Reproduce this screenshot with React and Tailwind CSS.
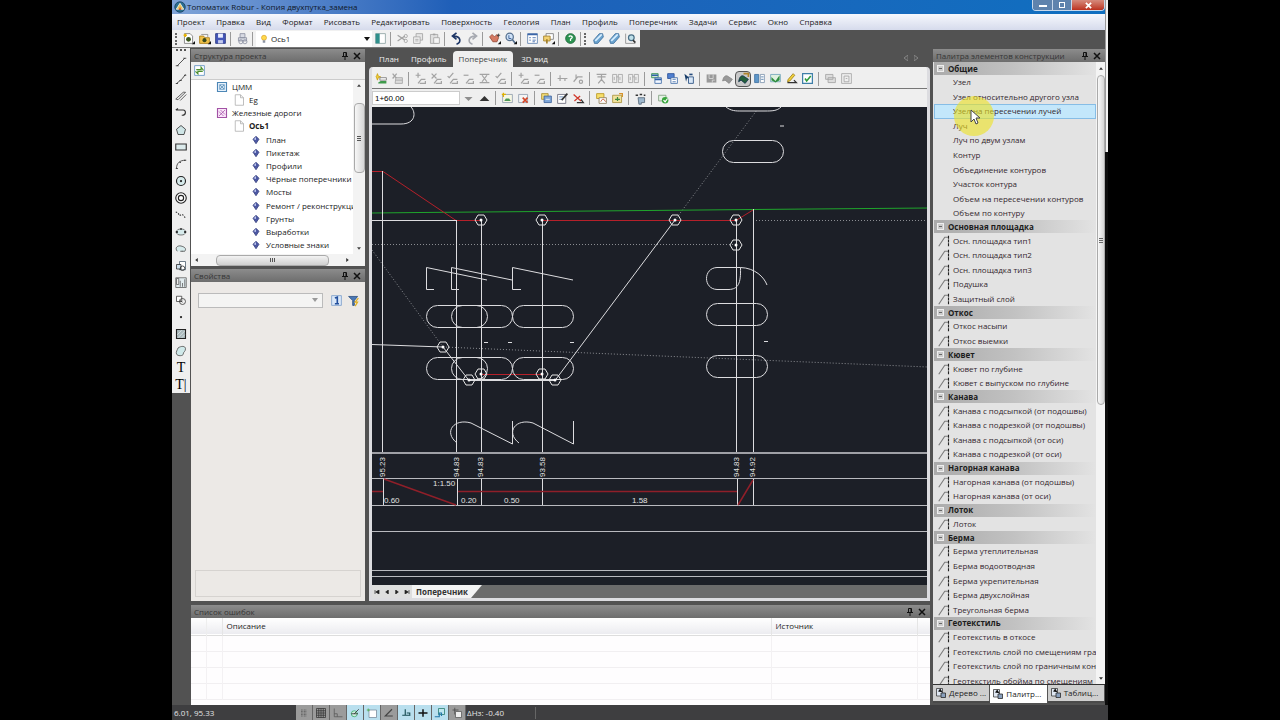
import { Fragment } from "react";
import clsx from "clsx";

const menuItems = [
  "Проект", "Правка", "Вид", "Формат", "Рисовать", "Редактировать", "Поверхность", "Геология",
  "План", "Профиль", "Поперечник", "Задачи", "Сервис", "Окно", "Справка",
];

const treeRows = [
  { label: "ЦММ", level: 0, icon: "dtm" },
  { label: "Eg", level: 1, icon: "sheet" },
  { label: "Железные дороги", level: 0, icon: "rail" },
  { label: "Ось1", level: 1, icon: "sheet", bold: true },
  { label: "План", level: 2, icon: "gem" },
  { label: "Пикетаж", level: 2, icon: "gem" },
  { label: "Профили", level: 2, icon: "gem" },
  { label: "Чёрные поперечники", level: 2, icon: "gem" },
  { label: "Мосты", level: 2, icon: "gem" },
  { label: "Ремонт / реконструкция", level: 2, icon: "gem" },
  { label: "Грунты", level: 2, icon: "gem" },
  { label: "Выработки", level: 2, icon: "gem" },
  { label: "Условные знаки", level: 2, icon: "gem" },
];

const paletteGroups = [
  {
    title: "Общие",
    plain: true,
    items: [
      "Узел", "Узел относительно другого узла", "Узел на пересечении лучей", "Луч", "Луч по двум узлам",
      "Контур", "Объединение контуров", "Участок контура", "Объем на пересечении контуров", "Объем по контуру",
    ],
  },
  { title: "Основная площадка", items: ["Осн. площадка тип1", "Осн. площадка тип2", "Осн. площадка тип3", "Подушка", "Защитный слой"] },
  { title: "Откос", items: ["Откос насыпи", "Откос выемки"] },
  { title: "Кювет", items: ["Кювет по глубине", "Кювет с выпуском по глубине"] },
  {
    title: "Канава",
    items: [
      "Канава с подсыпкой (от подошвы)", "Канава с подрезкой (от подошвы)",
      "Канава с подсыпкой (от оси)", "Канава с подрезкой (от оси)",
    ],
  },
  { title: "Нагорная канава", items: ["Нагорная канава (от подошвы)", "Нагорная канава (от оси)"] },
  { title: "Лоток", items: ["Лоток"] },
  { title: "Берма", items: ["Берма утеплительная", "Берма водоотводная", "Берма укрепительная", "Берма двухслойная", "Треугольная берма"] },
  {
    title: "Геотекстиль",
    items: [
      "Геотекстиль в откосе", "Геотекстиль слой по смещениям границ",
      "Геотекстиль слой по граничным контурам", "Геотекстиль обойма по смещениям",
    ],
  },
];

const selectedItem = "Узел на пересечении лучей";

// 16x16 drawings shared by all the toolbars
const G = "#a3a3a3";
const slope = <path d="M5 14l4-5h5M7 14h7v-3" stroke={G} strokeWidth="1.5" />;
const icons = {
  app: <><circle cx="8" cy="8" r="7" fill="#2b6f8f" stroke="#123a5c" /><path d="M3 11l5-8 5 8z" fill="#e9c15b" stroke="#fff" /><path d="M6 12l2-4 2 4z" fill="#c4552b" /></>,
  new: <><path d="M3 2h7l3 3v9H3z" fill="#fff" stroke="#777" /><circle cx="8" cy="9" r="3" fill="#39551d" /><path d="M2 4h4M4 2v4" stroke="#e8b400" strokeWidth="2" /><path d="M12 15h4v-4z" fill="#111" /></>,
  open: <><path d="M2 5h5l1 2h6v7H2z" fill="#f0c24b" stroke="#a97a13" /><circle cx="8" cy="10" r="2.5" fill="#3b4a1b" /><path d="M4 3h8v3" stroke="#888" /><path d="M12 15h4v-4z" fill="#111" /></>,
  save: <><path d="M2 2h12v12H2z" fill="#4557b8" stroke="#27357f" /><path d="M5 2h6v5H5z" fill="#e9edff" /><path d="M5 10h6v4H5z" fill="#c4cbee" /></>,
  print: <><path d="M5 2h6v5H5zM3 7h10v4H3z" fill="#d8dbe4" stroke="#8a8fa0" /><circle cx="6" cy="12" r="2.5" stroke="#8a8fa0" /><circle cx="11" cy="12" r="2.5" stroke="#8a8fa0" /></>,
  bulb: <><circle cx="8" cy="6" r="4" fill="#ffd94d" stroke="#d79b1b" /><path d="M6 10h4v4H6z" fill="#8d95a5" /></>,
  panel: <><path d="M2 2h12v12H2z" fill="#fff" stroke="#8aa0a0" /><path d="M2 2h5v12H2z" fill="#2f8f8b" /></>,
  cut: <><path d="M2 4l9 6M2 11l9-6" stroke={G} strokeWidth="1.5" /><circle cx="12" cy="5" r="2" stroke={G} /><circle cx="12" cy="11" r="2" stroke={G} /></>,
  copy: <><path d="M5 2h8v8H5z" fill="#e6e6e6" stroke={G} /><path d="M2 6h8v8H2z" fill="#f1f1f1" stroke={G} /><path d="M4 9h4M4 11h4" stroke={G} /></>,
  paste: <><path d="M3 3h9v11H3z" fill="#e0e0e0" stroke={G} /><path d="M6 2h3v2H6z" fill={G} /><path d="M7 7h7v7H7z" fill="#f5f5f5" stroke={G} /></>,
  undo: <path d="M8 15C14 13 14 5 4 5M8 1L3 5l5 4" stroke="#1c3566" strokeWidth="2" />,
  redo: <path d="M8 15C2 13 2 5 12 5M8 1l5 4-5 4" stroke="#a6a9b0" strokeWidth="2" />,
  hand: <><path d="M2 6l3-3 3 3 3-3 2 4-2 5H6z" fill="#d57a63" stroke="#954531" /><path d="M11 4h4M13 2v4" stroke="#333" /><path d="M12 15h4v-4z" fill="#111" /></>,
  zoom: <><circle cx="7" cy="6" r="4.5" fill="#cfe2f7" stroke="#56708f" strokeWidth="1.5" /><path d="M6 4v4h3" stroke="#27508c" /><path d="M10 9l4 5" stroke="#56708f" strokeWidth="2" /><path d="M12 15h4v-4z" fill="#111" /></>,
  list: <><path d="M2 2h12v12H2z" fill="#fff" stroke="#5d7fae" /><path d="M2 3h12" stroke="#3a65a8" strokeWidth="2" /><path d="M4 7h2M4 10h2M8 7h4M8 10h4M8 12h3" stroke="#3a65a8" /></>,
  props: <><path d="M5 2h9v7H5z" fill="#fff" stroke="#777" /><path d="M2 5h8v6H2z" fill="#f3d271" stroke="#9f7b24" /><path d="M6 9v5" stroke="#9f7b24" strokeWidth="2" /><path d="M12 15h4v-4z" fill="#111" /></>,
  help: <><circle cx="8" cy="8" r="6" fill="#2c9451" stroke="#1b6337" /><path d="M6 6c1-2 5-1 4 1L8 9v2" stroke="#fff" strokeWidth="1.5" /></>,
  tube: <><path d="M2 10l7-8h4l1 4-7 8H3z" fill="#6ba3cf" stroke="#3f6f9c" /><path d="M4 11l8-8" stroke="#d9efff" strokeWidth="2" /></>,
  find: <><path d="M2 2v12h12" stroke="#8a8a8a" /><circle cx="9" cy="7" r="3.5" fill="#bfe0ea" stroke="#4a6f86" strokeWidth="1.5" /><path d="M11 10l3 3" stroke="#333" strokeWidth="2" /></>,
  refresh: <><path d="M2 2h12v12H2z" fill="#fff" stroke="#5d8fc0" /><path d="M4 7h6V4l3 4M12 9H6v3L3 9" stroke="#4d8f2f" strokeWidth="1.5" /></>,
  layer: <><path d="M3 2l1 3 3 1-3 1-1 3-1-3-1-1 1-1z" fill="#f2cf3a" stroke="#c79f10" /><path d="M6 7h8v3H6z" fill="#fff" stroke="#777" /><path d="M4 13l3-2h7v3H4z" fill="#3f9a4b" /></>,
  layerOff: <><path d="M2 2l5 6M7 2L2 8" stroke={G} strokeWidth="1.5" /><path d="M6 7h8v7H5z" fill="#ddd" stroke={G} /><path d="M6 10h8" stroke={G} /></>,
  slopeAdd: <>{slope}<path d="M2 4h6M5 1v6" stroke={G} strokeWidth="1.5" /></>,
  slopeDel: <>{slope}<path d="M2 4h6" stroke={G} strokeWidth="1.5" /></>,
  slopeCut: <>{slope}<path d="M2 2l6 6M8 2L2 8" stroke={G} strokeWidth="1.5" /></>,
  slopeCheck: <>{slope}<path d="M2 5l2 2 5-6" stroke={G} strokeWidth="1.5" /></>,
  hourglass: <path d="M2 3h12M2 13h12M5 4l6 8M11 4l-6 8" stroke={G} strokeWidth="1.5" />,
  line: <path d="M2 8h12M5 4v7M11 8v3" stroke={G} strokeWidth="1.5" />,
  node: <path d="M2 12l5-6h6M9 12a2 2 0 104 0 2 2 0 10-4 0M5 3v5" stroke={G} strokeWidth="1.5" />,
  person: <path d="M2 3h12M8 3v6M3 6h10M8 9l-4 5M8 9l4 5" stroke={G} strokeWidth="1.5" />,
  book: <path d="M2 3h5v10H2zM9 3h5v10H9zM7 6h2M4 6v4M11 6v4" stroke={G} />,
  tblDb: <><path d="M2 2h8v5H2z" fill="#cde8cf" stroke="#2c8a4c" /><path d="M6 7h8v7H6z" fill="#f3f8ff" stroke="#3e6aa6" /><path d="M6 9h8M2 4h8" stroke="#2d61a8" strokeWidth="2" /></>,
  tblBlue: <><path d="M2 2h8v6H2z" fill="#4f7fd0" stroke="#2b4f96" /><path d="M6 7h8v7H6z" fill="#fff" stroke="#3e6aa6" /><path d="M8 9h4M8 12h4" stroke="#3e6aa6" /></>,
  pick: <><path d="M3 2l6 5-3 1-1 4z" fill="#173c68" /><path d="M8 6h6v8H8z" fill="#d9e7f7" stroke="#234a7c" /><path d="M9 3h4" stroke="#234a7c" strokeWidth="2" /></>,
  blockGray: <><path d="M2 3h12v10H2z" fill="#999" /><path d="M5 3v5h5V3M9 13v-3h3" stroke="#ddd" /></>,
  fillGray: <path d="M2 11C3 5 6 4 8 5l6 4-4 5-5-4z" fill="#999" stroke="#888" />,
  fillGreen: <><path d="M2 12C3 5 6 4 8 5l6 4-4 5-5-4z" fill="#24603a" stroke="#17334f" /><path d="M8 2h6v4" stroke="#b1852c" strokeWidth="2" /></>,
  split: <><path d="M2 3h5v10H2z" fill="#5e97c9" stroke="#3e6fa0" /><path d="M9 3h5v10H9z" fill="#fff" stroke="#7b93ad" /><path d="M10 6h3M10 9h3" stroke="#3e6fa0" /></>,
  flagGreen: <><path d="M2 3h12v9H2z" fill="#dff0df" stroke="#6fa3b9" /><path d="M3 6l5 5 5-7v6l-5 3-5-3z" fill="#2f8e40" /></>,
  pencil: <><path d="M4 9l6-7 2 2-6 7-3 1z" fill="#f3d33e" stroke="#9b7c11" /><path d="M3 13h11l-3-3" stroke="#333" strokeWidth="1.5" /></>,
  check: <><path d="M2 2h12v12H2z" fill="#fff" stroke="#3f7fa8" strokeWidth="1.5" /><path d="M5 8l2 3 5-6" stroke="#2f9b3a" strokeWidth="2" /></>,
  stack: <path d="M2 3h9v6H2zM5 7h9v6H5z" fill="#ddd" stroke={G} />,
  frame: <path d="M2 2h12v12H2zM5 5h6v7H5zM7 8h2" stroke={G} />,
  down: <path d="M3 6h10l-5 5z" fill="#8e8e8e" />,
  up: <path d="M2 11h12L8 5z" fill="#333" />,
  secAdd: <><path d="M2 3h12v10H2z" fill="#f7f7e4" stroke="#8f9cae" /><path d="M4 11l2-3h4l2 3z" fill="#4f9a57" /><path d="M1 3h5M3 1v5" stroke="#e0b100" strokeWidth="1.5" /></>,
  secDel: <><path d="M2 3h11v10H2z" fill="#f4f4f4" stroke="#8f9cae" /><path d="M7 7l6 6M13 7l-6 6" stroke="#d3472a" strokeWidth="2" /></>,
  secBlue: <><path d="M2 2h8v7H2z" fill="#f3dd77" stroke="#a98b2b" /><path d="M5 5h9v8H5z" fill="#7ea6d8" stroke="#3c619b" /><path d="M7 9h5" stroke="#fff" /></>,
  edit: <><path d="M2 3h10v11H2z" fill="#fff" stroke="#667" /><path d="M4 6h5M4 9h4" stroke="#4a76ad" /><path d="M7 10l7-8" stroke="#333" strokeWidth="2" /></>,
  cross: <><path d="M2 3l9 8M3 11l7-6" stroke="#d0392b" strokeWidth="1.5" /><path d="M6 13h8l-3-4" stroke="#333" strokeWidth="1.5" /></>,
  copySec: <><path d="M2 2h9v6H2z" fill="#f7df6a" stroke="#b7921b" /><path d="M5 7h9v7H5z" fill="#fff" stroke="#8a7a56" /><path d="M7 12l2-3h2l2 3" stroke="#c2512d" /></>,
  pasteSec: <><path d="M2 4h11v9H2z" fill="#f1e29b" stroke="#a9913d" /><path d="M5 9h6M8 6v5" stroke="#3d8a3f" strokeWidth="1.5" /><path d="M10 2h4v4" stroke="#d6932b" strokeWidth="1.5" /></>,
  chess: <><path d="M2 3h3v2H2zM7 2h3v2H7zM12 3h2v2h-2z" fill="#333" /><path d="M5 7h8v6H9v2H6z" fill="#9db7cd" stroke="#567" /></>,
  ok: <><path d="M2 4h9v7H2z" fill="#e5f2e5" stroke="#7c9d7c" /><circle cx="10" cy="10" r="4" fill="#37a53c" /><path d="M8 10l2 2 3-4" stroke="#fff" strokeWidth="1.5" /></>,
  one: <><path d="M2 2h12v12H2z" fill="#dbe8f8" stroke="#7b9cc9" /><path d="M6 5l3-1v8M6 12h5" stroke="#234f9c" strokeWidth="2" /></>,
  filter: <><path d="M2 3h11l-4 5v6H7V8z" fill="#4a78b5" stroke="#2b4d80" /><path d="M14 5l-4 5h3l-3 5" stroke="#e0b021" strokeWidth="1.5" /></>,
  dtm: <><path d="M2 2h12v12H2z" fill="#e8f3fc" stroke="#4d87b6" strokeWidth="1.5" /><path d="M5 5h6v6H5zM5 5l6 6M11 5l-6 6" stroke="#4d87b6" /></>,
  rail: <><path d="M2 2h12v12H2z" fill="#fbe6fa" stroke="#a252a5" strokeWidth="1.5" /><path d="M4 12l8-8M4 6l6 6M6 4l6 6" stroke="#a252a5" /></>,
  sheet: <path d="M3 1h7l4 4v10H3zM10 1v4h4" fill="#fff" stroke="#a9a9a9" />,
  gem: <><path d="M8 3l4 4-4 6-4-6z" fill="#4c58a4" stroke="#333c7a" /><path d="M8 4v4L5 7z" fill="#c0c9f0" /></>,
  // drawing tools
  segment: <path d="M3 13L13 3M1 13h4M11 3h4" stroke="#222" />,
  poly: <path d="M2 14l5-4 3-3 4-5M6 10h3M1 14h3M12 3h3" stroke="#222" />,
  multi: <path d="M1 12L11 3h3L4 13zM7 14l8-8" stroke="#333" />,
  arcLine: <path d="M1 4h10c4 0 4 7-1 7M1 4l3-2M9 11h3" stroke="#333" strokeWidth="1.5" />,
  pent: <path d="M8 2l6 5-2 7H4L2 7z" fill="#cfe5e6" stroke="#222" />,
  rect: <path d="M1 4h14v8H1z" fill="#dcebec" stroke="#333" strokeWidth="1.5" />,
  arc: <path d="M2 14C2 7 6 3 14 3M1 14h3M6 6h2M12 3h3" stroke="#222" />,
  circle: <><circle cx="8" cy="8" r="6" fill="#d7ebec" stroke="#222" strokeWidth="1.5" /><circle cx="8" cy="8" r="1.5" fill="#222" /></>,
  ring: <><circle cx="8" cy="8" r="7" fill="#fff" stroke="#222" strokeWidth="1.5" /><circle cx="8" cy="8" r="3.5" stroke="#222" strokeWidth="1.5" /></>,
  spline: <path d="M1 4l3 1 2 4 3-2 3 2 2 4" stroke="#333" strokeDasharray="2 2" strokeWidth="1.5" />,
  ellipse: <><ellipse cx="8" cy="8" rx="6" ry="4" fill="#d7ebec" stroke="#555" /><path d="M1 8h3M12 8h3M8 3v2" stroke="#111" strokeWidth="2" /></>,
  ellArc: <path d="M3 11C-1 6 4 3 8 4s8 3 5 7H9M7 11h3" fill="#d7ebec" stroke="#444" />,
  blockIn: <><path d="M6 2h8v11H6z" fill="#fff" stroke="#456" /><path d="M2 6h6v6H2z" fill="#cfe0ec" stroke="#222" /><circle cx="10" cy="11" r="3" stroke="#222" /></>,
  rulers: <path d="M2 2h3v8H2zM7 5v8M10 8v5M13 3v10M1 14h14V1H1z" fill="#e1ebee" stroke="#555" />,
  block: <><path d="M2 3h7v7H2z" fill="#fff" stroke="#333" /><circle cx="10" cy="10" r="4" stroke="#333" /><path d="M6 8l4 3" stroke="#333" /></>,
  dot: <circle cx="8" cy="8" r="1.5" fill="#222" />,
  hatch: <><path d="M2 2h12v12H2z" fill="#aab9bc" stroke="#222" strokeWidth="1.5" /><path d="M3 9l6-6M4 13l9-9M9 13l4-4" stroke="#dfe8ea" /></>,
  region: <path d="M4 4c4-3 10-3 10 1s-3 4-3 7-8 3-9 0 1-5 2-8z" fill="#cfe9ea" stroke="#444" />,
  // status bar toggles
  snap: <path d="M4 4h8M4 6h8M4 8h8M4 10h8M4 12h8" stroke="#444" strokeDasharray="1 1" />,
  grid: <path d="M2 2h12v12H2zM2 5h12M2 8h12M2 11h12M5 2v12M8 2v12M11 2v12" stroke="#333" />,
  ortho: <path d="M3 2v11h11M3 9h4v4" stroke="#555" />,
  polar: <><circle cx="7" cy="9" r="4" fill="#cfeee0" stroke="#3a6" /><path d="M3 9h9M7 9l6-6" stroke="#222" /></>,
  osnap: <><path d="M4 4h10v10H4z" fill="#fff" stroke="#789" /><path d="M1 4h4M3 2v4" stroke="#4a4" /></>,
  angle: <path d="M12 3L3 12h10" stroke="#444" strokeWidth="1.5" />,
  perp: <path d="M7 3v8M3 11h9M9 8h4v4" stroke="#154a50" strokeWidth="1.5" />,
  plus: <path d="M8 3v10M2 8h12" stroke="#111" strokeWidth="2" />,
  objs: <><path d="M6 2h8v8H6z" fill="#bfe6ef" stroke="#276" /><path d="M1 13h6V8h3v4" stroke="#27a" strokeWidth="1.5" /></>,
  copies: <><path d="M2 4h8M5 1v9" stroke="#444" /><path d="M6 6h8v8H6z" fill="#eee" stroke="#555" /></>,
  tabDoc: <><path d="M2 2h8v10H2z" fill="#dfe7f2" stroke="#333" /><path d="M4 6l3-4 3 5z" fill="#111" /><path d="M8 8h6v6H8z" fill="#8aa0bd" stroke="#222" /></>,
  elem: <><path d="M1 15L9 3h5" stroke="#7d7d7d" strokeWidth="1.5" /><path d="M14 1v15" stroke="#222" strokeWidth="1.5" strokeDasharray="4 1" /></>,
};

const mainTools = [
  ["new", "open", "save"], ["print"], "combo", ["panel"], ["cut", "copy", "paste"], ["undo", "redo"],
  ["hand", "zoom"], ["list", "props"], ["help"], ["tube", "tube", "find"],
];

const sectionTools = [
  ["layer", "layerOff"],
  ["slopeAdd", "slopeCut", "slopeCheck", "slopeDel", "hourglass", "slopeCheck"],
  ["slopeAdd", "slopeDel"], ["line", "node"], ["person", "book", "book"], ["tblDb", "tblBlue", "pick"],
  ["blockGray", "fillGray", "fillGreen", "split", "flagGreen", "pencil", "check"], ["stack", "frame"],
];

const stationTools = [["down", "up"], ["secAdd", "secDel"], ["secBlue", "edit", "cross"], ["copySec", "pasteSec"], ["chess"], ["ok"]];

const drawTools = [
  "segment", "poly", "multi", "arcLine", "pent", "rect", "arc", "circle", "ring", "spline",
  "ellipse", "ellArc", "blockIn", "rulers", "block", "dot", "hatch", "region",
];

const statusTools = [
  ["snap"], ["grid"], ["ortho"], ["polar", true], ["osnap", true], ["angle"], ["perp", true], ["plus", true], ["objs", true], ["copies"],
];

function Icon({ name, className = "size-[13px]" }) {
  return (
    <svg viewBox="0 0 16 16" fill="none" aria-hidden="true" className={clsx("shrink-0", className)}>
      {icons[name]}
    </svg>
  );
}

function ToolButton({ name, active }) {
  return (
    <button
      type="button"
      aria-label={name}
      className={clsx(
        "flex h-4 w-[16px] shrink-0 items-center justify-center",
        active && "rounded-sm border border-[#555] bg-[#c9c9c9]"
      )}
    >
      <Icon name={name} />
    </button>
  );
}

function Divider({ className = "mr-[3px] ml-0.5" }) {
  return <span className={clsx("h-3.5 w-px shrink-0 bg-[#9a9a9a]", className)} />;
}

function ToolGroups({ groups, active }) {
  return groups.map((group, i) => (
    <Fragment key={i}>
      {i > 0 && <Divider className="mx-[3px]" />}
      {group.map((name, j) => (
        <ToolButton key={j} name={name} active={name === active} />
      ))}
    </Fragment>
  ));
}

function PanelHeader({ title }) {
  return (
    <div className="flex h-[13px] shrink-0 items-center bg-linear-to-b from-[#8c8c8c] to-[#6d6d6d] pr-1 pl-[3px]">
      <h2 className="flex-1 truncate text-[#363636]">{title}</h2>
      <button type="button" aria-label="Закрепить" className="mr-1">
        <svg viewBox="0 0 8 8" className="size-2" fill="none" stroke="#111">
          <path d="M2.500 0.500h3v4h-3zM1 4.500h6M4 4.500V8M5 1v3" />
        </svg>
      </button>
      <button type="button" aria-label="Закрыть">
        <svg viewBox="0 0 8 8" className="size-2" stroke="#111" strokeWidth="1.500">
          <path d="M1 1l6 6M7 1L1 7" />
        </svg>
      </button>
    </div>
  );
}

function TitleBar() {
  return (
    <header className="flex h-3.5 shrink-0 bg-linear-to-r from-[#7fa3d8] via-[#1f5fb8] via-30% to-[#0f6fc0]">
      <Icon name="app" className="mt-px ml-0.5 size-3" />
      <h1 className="flex-1 pl-px leading-[14px] text-[#101828]">Топоматик Robur - Копия двухпутка_замена</h1>
      <div className="flex h-[11px] overflow-hidden rounded-b-sm border border-t-0 border-[#c8d8ea]">
        <button type="button" aria-label="Свернуть" className="flex w-[19px] items-end justify-center bg-[#5f83ad] pb-[3px]">
          <span className="h-0.5 w-2 bg-white" />
        </button>
        <button type="button" aria-label="Развернуть" className="flex w-5 items-center justify-center border-x border-[#c8d8ea] bg-[#5f83ad]">
          <span className="size-1.5 border border-white" />
        </button>
        <button type="button" aria-label="Закрыть окно" className="flex w-8 items-center justify-center bg-linear-to-b from-[#d58a7c] to-[#bb2f1d]">
          <svg viewBox="0 0 8 8" className="size-[7px]" stroke="#fff" strokeWidth="2">
            <path d="M1 1l6 6M7 1L1 7" />
          </svg>
        </button>
      </div>
    </header>
  );
}

function MainToolbar() {
  return (
    <div className="flex h-[18px] shrink-0 bg-[#525252]">
      <div className="flex items-center border-b border-[#777] bg-[#f1f1f1] pr-0.5 pl-[3px]">
        <span className="mr-[3px] h-3 border-l-2 border-dotted border-[#666]" />
        {mainTools.map((group, i) => (
          <Fragment key={i}>
            {i > 0 && i !== 3 && <Divider />}
            {i === 9 && <span className="mr-1 h-3 border-l-2 border-dotted border-[#666]" />}
            {group === "combo" ? (
              <label className="flex h-4 w-[116px] items-center bg-white pl-[3px]">
                <Icon name="bulb" className="size-2.5" />
                <select aria-label="Ось" className="flex-1 appearance-none bg-white pl-0.5 text-[#222]">
                  <option>Ось1</option>
                </select>
                <svg viewBox="0 0 6 4" className="mr-0.5 h-1 w-1.5" fill="#111"><path d="M0 0h6L3 4z" /></svg>
              </label>
            ) : (
              group.map((name, j) => <ToolButton key={j} name={name} />)
            )}
          </Fragment>
        ))}
      </div>
    </div>
  );
}

function DrawBar() {
  return (
    <div className="flex w-[18px] shrink-0 flex-col items-center self-start bg-[#efefef] pt-px">
      <span className="mb-0.5 w-2.5 border-t-2 border-dotted border-[#555]" />
      {drawTools.map((name) => (
        <button key={name} type="button" aria-label={name} className="flex h-[17px] w-full items-center justify-center">
          <Icon name={name} className="size-3" />
        </button>
      ))}
      <button type="button" className="h-[17px] w-full font-[Liberation_Serif,serif] text-[14px] leading-[17px] text-black">T</button>
      <button type="button" className="h-[17px] w-full font-[Liberation_Serif,serif] text-[14px] leading-[17px] text-black">T|</button>
    </div>
  );
}

function ProjectPanel() {
  return (
    <section className="flex h-[217px] shrink-0 flex-col bg-[#eee]">
      <PanelHeader title="Структура проекта" />
      <div className="flex h-[17px] shrink-0 items-center">
        <ToolButton name="refresh" />
      </div>
      <div className="flex min-h-0 flex-1 border-t border-[#ccc] bg-white">
        <ul className="flex min-w-0 flex-1 flex-col overflow-hidden pb-0.5 text-[#1b1b1b]">
          {treeRows.map((row) => (
            <li
              key={row.label}
              className={clsx(
                "flex min-h-0 flex-1 items-center gap-1 whitespace-nowrap",
                row.level === 0 && "pl-[25px]",
                row.level === 1 && "pl-[42px]",
                row.level === 2 && "pl-[59px]",
                row.bold && "font-bold"
              )}
            >
              <Icon name={row.icon} className="size-3" />
              {row.label}
            </li>
          ))}
        </ul>
        <div className="flex w-3 shrink-0 flex-col items-center justify-between bg-[#f3f3f3] py-1">
          <svg viewBox="0 0 6 4" className="h-[3px] w-1" fill="#444"><path d="M0 4h6L3 0z" /></svg>
          <span className="mt-4 mb-auto flex h-[70px] w-[11px] flex-col items-center justify-center gap-px rounded-sm border border-[#aaa] bg-linear-to-r from-[#f7f7f7] to-[#d6d6d6]">
            <i className="h-px w-1 bg-[#555]" />
            <i className="h-px w-1 bg-[#555]" />
            <i className="h-px w-1 bg-[#555]" />
          </span>
          <svg viewBox="0 0 6 4" className="h-[3px] w-1" fill="#444"><path d="M0 0h6L3 4z" /></svg>
        </div>
      </div>
      <div className="flex h-3 shrink-0 items-center justify-between bg-[#f3f3f3] pr-4 pl-1">
        <svg viewBox="0 0 4 6" className="h-1 w-[3px]" fill="#333"><path d="M4 0v6L0 3z" /></svg>
        <span className="flex h-[11px] w-[113px] items-center justify-center gap-px rounded-sm border border-[#aaa] bg-linear-to-b from-[#f3f3f3] to-[#cfcfcf]">
          <i className="h-1 w-px bg-[#555]" />
          <i className="h-1 w-px bg-[#555]" />
          <i className="h-1 w-px bg-[#555]" />
        </span>
        <svg viewBox="0 0 4 6" className="h-1 w-[3px]" fill="#333"><path d="M0 0v6l4-3z" /></svg>
      </div>
    </section>
  );
}

function PropertiesPanel() {
  return (
    <section className="flex min-h-0 flex-1 flex-col bg-[#ece9e6]">
      <PanelHeader title="Свойства" />
      <div className="mt-2.5 flex items-center gap-px pr-1 pl-[7px]">
        <div className="mr-1 flex h-[15px] flex-1 items-center border border-[#bbb] bg-[#f4f4f3]">
          <select aria-label="Объект" className="flex-1 appearance-none" />
          <svg viewBox="0 0 6 4" className="mr-1 h-1 w-1.5" fill="#999"><path d="M0 0h6L3 4z" /></svg>
        </div>
        <ToolButton name="one" />
        <ToolButton name="filter" />
      </div>
      <div className="mx-1 mt-auto mb-1 h-[27px] border border-[#d6d3d0]" />
    </section>
  );
}

const capsules = [
  [722, 141, 61], [426, 306, 61], [451, 306, 61], [512, 306, 61], [706, 304, 61],
  [426, 358, 61], [451, 358, 61], [512, 358, 61], [706, 356, 61],
];
const nodes = [
  [481, 220], [542, 220], [675, 220], [736, 220], [736, 245], [443, 347], [469, 380], [481, 374], [542, 374], [555, 380],
];
const marks = [[382, "95.23"], [456, "94.83"], [480, "94.83"], [542, "93.58"], [736, "94.83"], [752, "94.92"]];

function Drawing() {
  return (
    <svg
      viewBox="372 107 555 478"
      preserveAspectRatio="xMinYMin slice"
      fill="none"
      role="img"
      aria-label="Поперечник 1+60.00"
      className="min-h-0 w-full flex-1 bg-[#1c1f27]"
    >
      <g stroke="#8b8d92" strokeDasharray="1 2">
        <path d="M372 244.500H736M753 220.500H928M372 250L443 347M675 220L757 110M443 347L928 367" />
      </g>
      <path d="M372 213L420 212.500L540 211.500L753 209.500L928 208" stroke="#1fa52c" />
      <path d="M372 171.500H383L456 220.500H481M542 220.500H736L753 210M481 374.500H542" stroke="#b5202a" />
      <g stroke="#dcdcdf">
        <path d="M382.500 171V452M456.500 220V452M481.500 220V452M542.500 220V452M736.500 220V452M753.500 209V452" />
        <path d="M372 220.500H456M372 344.500L443 347L469 380.500H555L675 220" />
        <path d="M372 124H401C416 124 416 112 411 107M726 107C731 111 736 111 741 111H765C772 111 777 111 781 107" />
        {capsules.map(([x, y, w], i) => (
          <rect key={i} x={x + 0.5} y={y - 0.5} width={w} height="22" rx="11" />
        ))}
        <path d="M434 289.500H426.500V267.500L487 280M459 289.500H451.500V267.500L512 280M521 289.500H512.500V267.500L573 280" />
        <path d="M740.500 267.500H717C703 268 703 289 717 289.500H729C738 289 741 284 740.500 267.500C755 268 764 277 767 285" />
        <path d="M457 443C443 432 454 418 471 423L512.500 444V421M519 443C505 432 516 418 533 423L573.500 444V421" />
        <path d="M484 342.500H488M508 342.500H512M570 342.500H574M780 126H784M764 341.500H768" />
      </g>
      {nodes.map(([x, y], i) => (
        <g key={i}>
          <path d={`M${x - 6} ${y}l3-5h6l3 5-3 5h-6z`} stroke="#e6e6e6" />
          <circle cx={x} cy={y} r="1.500" fill="#fff" />
        </g>
      ))}
      <path d="M372 453H928" stroke="#9fa0a6" strokeWidth="2" />
      <path d="M372 478.500H928M372 505.500H928M372 531.500H928M372 570.500H928M372 576.500H928" stroke="#b9babf" />
      <path d="M383.500 479V505M457.500 479V505M481.500 479V505M542.500 479V505M737.500 479V505M753.500 479V505" stroke="#dcdcdf" />
      <path d="M372 491.500H383M384 479L456 505M458 491.500H737M738 505L753 480" stroke="#8f1f29" strokeWidth="1.500" />
      <g fill="#e2e2e2" fontFamily="Liberation Sans, Arial, sans-serif" fontSize="8">
        {marks.map(([x, label], i) => (
          <text key={i} transform={`translate(${x + 3} 477) rotate(-90)`}>{label}</text>
        ))}
        <text x="433" y="486">1:1.50</text>
        <text x="384" y="503">0.60</text>
        <text x="461" y="503">0.20</text>
        <text x="504" y="503">0.50</text>
        <text x="632" y="503">1.58</text>
      </g>
    </svg>
  );
}

function DocumentArea() {
  return (
    <section className="flex min-w-0 flex-1 flex-col">
      <nav className="flex h-[18px] shrink-0 items-end pl-1 text-[#eee]">
        <button type="button" className="h-4 px-1.5">План</button>
        <button type="button" className="h-4 px-1.5">Профиль</button>
        <button type="button" className="h-4 rounded-t-sm bg-[#efefef] px-1.5 text-[#444]">Поперечник</button>
        <button type="button" className="h-4 px-2">3D вид</button>
        <span className="mr-3 mb-1.5 ml-auto flex gap-1.5">
          <svg viewBox="0 0 4 6" className="h-1.5 w-1" fill="none" stroke="#858585"><path d="M4 0v6L0 3z" /></svg>
          <svg viewBox="0 0 4 6" className="h-1.5 w-1" fill="none" stroke="#858585"><path d="M0 0v6l4-3z" /></svg>
        </span>
      </nav>
      <div className="flex min-h-0 flex-1 flex-col rounded-t-sm border-x-[3px] border-b-[3px] border-[#dcdce0] bg-[#efefef]">
        <div className="flex h-[22px] shrink-0 items-center border-b border-[#777] pt-0.5 pl-px">
          <ToolGroups groups={sectionTools} active="fillGreen" />
        </div>
        <div className="flex h-[18px] shrink-0 items-center">
          <input aria-label="Пикет" defaultValue="1+60.00" className="h-3.5 w-[88px] border border-[#ccc] bg-white px-0.5 font-[Liberation_Sans,Arial,sans-serif] text-black" />
          <ToolGroups groups={stationTools} />
        </div>
        <Drawing />
        <div className="flex h-[13px] shrink-0 bg-[#6b6b6b]">
          <div className="flex items-center bg-[#dedede]">
            {["M1 0v6M7 0v6L2 3z", "M6 0v6L2 3z", "M2 0v6l4-3z", "M7 0v6M1 0v6l5-3z"].map((d) => (
              <button key={d} type="button" aria-label="Лист" className="flex w-2.5 justify-center">
                <svg viewBox="0 0 8 6" className="h-1 w-1.5" fill="#222" stroke="#222"><path d={d} /></svg>
              </button>
            ))}
          </div>
          <button type="button" className="bg-[#f3f3f3] pl-1 font-bold text-[#333]">Поперечник</button>
          <svg viewBox="0 0 14 13" className="h-[13px] w-3.5" fill="#f3f3f3"><path d="M0 0h14L3 13H0z" /></svg>
        </div>
      </div>
    </section>
  );
}

function ErrorList() {
  return (
    <section className="flex h-[100px] shrink-0 flex-col bg-[#fefdfe]">
      <PanelHeader title="Список ошибок" />
      <table className="w-full table-fixed text-left text-[#222]">
        <thead>
          <tr className="h-[17px] border-b border-[#ddd] bg-linear-to-b from-white to-[#ececf0]">
            <th className="w-[15px] border-r border-[#eee]" />
            <th className="w-4 border-r border-[#e5e5e5]" />
            <th className="border-r border-[#e5e5e5] pl-1 font-normal">Описание</th>
            <th className="w-[146px] border-r border-[#e5e5e5] pl-1 font-normal">Источник</th>
            <th className="w-[13px]" />
          </tr>
        </thead>
        <tbody>
          {[0, 1, 2, 3].map((i) => (
            <tr key={i} className="h-4 border-b border-[#f1eff1]">
              <td className="border-r border-[#f3f1f3]" />
              <td className="border-r border-[#f3f1f3]" />
              <td className="border-r border-[#f3f1f3]" />
              <td className="border-r border-[#f3f1f3]" />
              <td />
            </tr>
          ))}
        </tbody>
      </table>
    </section>
  );
}

function Pointer() {
  return (
    <svg viewBox="0 0 40 40" className="pointer-events-none absolute -top-2 left-5 z-10 size-10" aria-hidden="true">
      <circle cx="20" cy="20" r="20" fill="#efe21f" fillOpacity="0.600" />
      <path d="M17 14v12l3-3 2 5 2-1-2-5h4z" fill="#fff" stroke="#444" />
    </svg>
  );
}

function PalettePanel() {
  return (
    <aside className="mb-0.5 flex w-[172px] shrink-0 flex-col bg-[#e3e3e3]">
      <PanelHeader title="Палитра элементов конструкции" />
      <div className="flex min-h-0 flex-1 overflow-hidden border-b border-[#333]">
        <ul className="flex h-[626px] min-w-0 flex-1 flex-col pl-px">
          {paletteGroups.map((group) => (
            <Fragment key={group.title}>
              <li className="flex h-[13px] shrink-0 items-center bg-linear-to-r from-[#ababab] via-[#c2c2c2] to-[#e3e3e3] pl-[3px] font-bold text-[#1c1c1c]">
                <button type="button" className="flex items-center gap-1">
                  <span className="flex size-[7px] items-center justify-center border border-[#eee] bg-[#ccc]">
                    <span className="h-px w-[3px] bg-[#666]" />
                  </span>
                  {group.title}
                </button>
              </li>
              {group.items.map((item) => (
                <li key={item} className="relative min-h-0 flex-1">
                  <button
                    type="button"
                    className={clsx(
                      "flex size-full items-center overflow-hidden pl-1 whitespace-nowrap text-[#33272e]",
                      item === selectedItem && "border border-[#86bde6] bg-[#c3e7fb]"
                    )}
                  >
                    {group.plain ? (
                      <span className={item === selectedItem ? "w-3.5" : "w-[15px]"} />
                    ) : (
                      <Icon name="elem" className="mr-[3px] size-3" />
                    )}
                    {item}
                  </button>
                  {item === selectedItem && <Pointer />}
                </li>
              ))}
            </Fragment>
          ))}
        </ul>
        <div className="flex w-[9px] shrink-0 flex-col items-center bg-[#f4f4f4] pb-1">
          <svg viewBox="0 0 6 4" className="my-[5px] h-[3px] w-1 shrink-0" fill="#333"><path d="M0 4h6L3 0z" /></svg>
          <span className="flex h-[330px] w-2 shrink-0 flex-col items-center justify-center gap-px rounded-sm border border-[#aaa] bg-linear-to-r from-[#fafafa] to-[#d4d4d4]">
            <i className="h-px w-1 bg-[#666]" />
            <i className="h-px w-1 bg-[#666]" />
            <i className="h-px w-1 bg-[#666]" />
          </span>
          <svg viewBox="0 0 6 4" className="mt-auto h-[3px] w-1 shrink-0" fill="#333"><path d="M0 0h6L3 4z" /></svg>
        </div>
      </div>
      <div className="flex h-[18px] shrink-0 bg-[#4a4a4a] text-[#222]">
        {["Дерево ...", "Палитр...", "Таблиц..."].map((tab, i) => (
          <button
            key={tab}
            type="button"
            className={clsx(
              "flex flex-1 items-center gap-0.5 border-r border-[#555] pl-0.5 whitespace-nowrap",
              i === 1 ? "bg-white" : "mb-0.5 bg-[#cfcfcf]"
            )}
          >
            <Icon name="tabDoc" className="size-3" />
            {tab}
          </button>
        ))}
      </div>
    </aside>
  );
}

function StatusBar() {
  return (
    <footer className="flex h-[15px] shrink-0 items-center bg-[#3e3e40] text-[#e4e4e4]">
      <span className="w-[124px] pl-0.5">6.01, 95.33</span>
      {statusTools.map(([name, on]) => (
        <button
          key={name}
          type="button"
          aria-label={name}
          aria-pressed={!!on}
          className={clsx(
            "flex h-full w-[17px] items-center justify-center border-r border-[#666]",
            on ? "bg-[#b9dfee]" : "bg-[#9b9b9b]"
          )}
        >
          <Icon name={name} className="size-3" />
        </button>
      ))}
      <span className="w-[70px] border-r border-[#666] pl-px">ΔHз: -0.40</span>
    </footer>
  );
}

function App() {
  return (
    <div className="flex h-screen justify-center bg-black px-[172px] font-['Open_Sans','Noto_Sans',sans-serif] text-[8px] leading-[12px]">
      <div className="flex min-w-0 flex-1 flex-col bg-[#525252]">
        <div className="flex min-h-0 flex-1">
          <div className="flex min-w-0 flex-1 flex-col">
            <TitleBar />
            <nav className="flex h-4 shrink-0 items-center bg-linear-to-b from-[#f6f8fd] to-[#d6dbec] pl-[5px] text-[#222]">
              <div className="flex w-full max-w-[655px] justify-between">
                {menuItems.map((item) => (
                  <button key={item} type="button">{item}</button>
                ))}
              </div>
            </nav>
            <MainToolbar />
            <div className="flex min-h-0 flex-1">
              <DrawBar />
              <div className="ml-px flex min-w-0 flex-1 flex-col gap-1 pt-px">
                <div className="flex min-h-0 flex-1 gap-1">
                  <div className="flex w-[174px] shrink-0 flex-col gap-[3px]">
                    <ProjectPanel />
                    <PropertiesPanel />
                  </div>
                  <DocumentArea />
                </div>
                <ErrorList />
              </div>
              <div className="ml-[3px] flex pt-px">
                <PalettePanel />
              </div>
            </div>
          </div>
          <div className="flex w-[3px] shrink-0 flex-col bg-[#0c0c0c]">
            <div className="h-[152px] border-l border-[#999] bg-[#f2f2f2]" />
          </div>
        </div>
        <StatusBar />
      </div>
    </div>
  );
}

export default App;
